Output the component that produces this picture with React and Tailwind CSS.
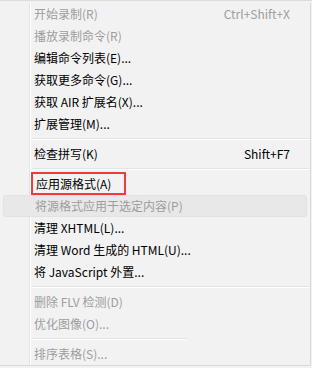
import React from "react";

const rows = [
  { label: "开始录制(R)", shortcut: "Ctrl+Shift+X", disabled: true },
  { label: "播放录制命令(R)", disabled: true },
  { label: "编辑命令列表(E)..." },
  { label: "获取更多命令(G)..." },
  { label: "获取 AIR 扩展名(X)..." },
  { label: "扩展管理(M)..." },
  { sep: true },
  { label: "检查拼写(K)", shortcut: "Shift+F7" },
  { sep: true },
  { label: "应用源格式(A)", boxed: true },
  { label: "将源格式应用于选定内容(P)", disabled: true, hover: true },
  { label: "清理 XHTML(L)..." },
  { label: "清理 Word 生成的 HTML(U)..." },
  { label: "将 JavaScript 外置..." },
  { sep: true },
  { label: "删除 FLV 检测(D)", disabled: true },
  { label: "优化图像(O)...", disabled: true },
  { sep: true, short: true },
  { label: "排序表格(S)...", disabled: true },
];

function Separator({ short }) {
  return (
    <div className="flex h-[8px]">
      <div className="w-[30px] shrink-0 border-r border-[#e2e3e3]" />
      <div className="flex-1 border-l border-white pl-[1px] flex items-center">
        <div className={`${short ? "w-[155px]" : "w-[278px]"} h-[2px] border-t border-[#e2e3e3] border-b border-b-white`} />
      </div>
    </div>
  );
}

function Item({ label, shortcut, disabled, hover, boxed }) {
  const color = disabled ? "text-[#9d9d9d]" : "text-black";
  if (hover) {
    return (
      <div className="flex h-[22px] pl-[3px] pr-[3px]">
        <div className="flex-1 flex items-center rounded-[3px] bg-[#e8e8e8] border border-[#e2e2e2] pl-[31px]">
          <span className={color}>{label}</span>
        </div>
      </div>
    );
  }
  return (
    <div className="flex h-[22px]">
      <div className="w-[30px] shrink-0 border-r border-[#e2e3e3]" />
      <div className="flex-1 flex items-center border-l border-white pr-[20px]">
        {boxed ? (
          <span className="h-[23px] -mt-[1px] flex items-center border-2 border-[#ee3a3a] pl-[3px] pr-[13px] text-black">
            {label}
          </span>
        ) : (
          <span className={`pl-[3px] ${color}`}>{label}</span>
        )}
        {shortcut && <span className={`ml-auto ${color}`}>{shortcut}</span>}
      </div>
    </div>
  );
}

export default function App() {
  return (
    <div
      className="w-[312px] h-[368px] bg-[#f2f2f2] border-t border-[#dcdcdc] pt-[2px] text-[12px] leading-none overflow-hidden"
      style={{ fontFamily: '"Noto Sans CJK SC", "Noto Sans", sans-serif' }}
    >
      <div className="border-r border-b border-[#d9d9d9] w-[311px]">
        {rows.map((r, i) =>
          r.sep ? <Separator key={i} short={r.short} /> : <Item key={i} {...r} />
        )}
      </div>
    </div>
  );
}
